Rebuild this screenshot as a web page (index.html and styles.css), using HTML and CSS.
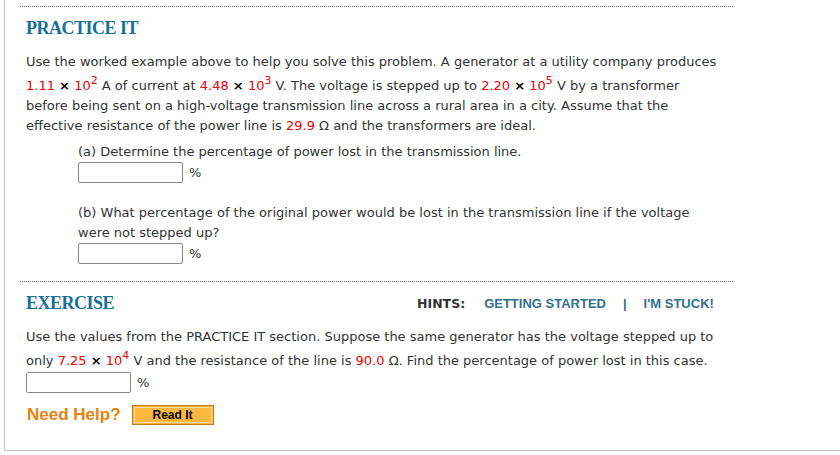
FILE: index.html
```html
<!DOCTYPE html>
<html>
<head>
<meta charset="utf-8">
<link rel="stylesheet" href="styles.css">
</head>
<body>
<div class="frame">
  <section class="sec">
    <div class="rule"></div>
    <h2 class="title">PRACTICE IT</h2>
    <p class="text">Use the worked example above to help you solve this problem. A generator at a utility company produces<br><span class="red">1.11</span> <span class="x">×</span> <span class="red">10<sup>2</sup></span> A of current at <span class="red">4.48</span> <span class="x">×</span> <span class="red">10<sup>3</sup></span> V. The voltage is stepped up to <span class="red">2.20</span> <span class="x">×</span> <span class="red">10<sup>5</sup></span> V by a transformer<br>before being sent on a high-voltage transmission line across a rural area in a city. Assume that the<br>effective resistance of the power line is <span class="red">29.9</span> Ω and the transformers are ideal.</p>
    <div class="part part-a">
      <div class="q">(a) Determine the percentage of power lost in the transmission line.</div>
      <div class="answer"><span class="box"></span><span class="unit">%</span></div>
    </div>
    <div class="part part-b">
      <div class="q">(b) What percentage of the original power would be lost in the transmission line if the voltage<br>were not stepped up?</div>
      <div class="answer"><span class="box"></span><span class="unit">%</span></div>
    </div>
  </section>
  <section class="sec sec2">
    <div class="rule"></div>
    <div class="head-row">
      <h2 class="title">EXERCISE</h2>
      <div class="hints"><span class="hl">HINTS:</span><span class="link">GETTING STARTED</span><span class="bar">|</span><span class="link">I'M STUCK!</span></div>
    </div>
    <p class="text text2">Use the values from the PRACTICE IT section. Suppose the same generator has the voltage stepped up to<br>only <span class="red">7.25</span> <span class="x">×</span> <span class="red">10<sup>4</sup></span> V and the resistance of the line is <span class="red">90.0</span> Ω. Find the percentage of power lost in this case.</p>
    <div class="answer ex-answer"><span class="box"></span><span class="unit">%</span></div>
    <div class="help">
      <span class="need">Need Help?</span>
      <span class="btn"><span class="btn-in">Read It</span></span>
    </div>
  </section>
</div>
</body>
</html>
```
FILE: styles.css
```css
html, body {
  margin: 0;
  padding: 0;
  background: #fff;
}
body {
  font-family: "DejaVu Sans", Verdana, sans-serif;
  font-size: 13px;
  color: #333;
}
.frame {
  margin-left: 4px;
  width: 900px;
  height: 451px;
  border-left: 1px solid #c8c8c8;
  border-bottom: 1px solid #c8c8c8;
  box-sizing: border-box;
}
.sec {
  padding-left: 15px;
  padding-top: 6px;
}
.rule {
  width: 713px;
  border-top: 1px dotted #777;
}
.title {
  margin: 0 0 0 6px;
  padding-top: 13px;
  font-family: "Liberation Serif", "Times New Roman", serif;
  font-weight: bold;
  font-size: 18px;
  line-height: 17px;
  letter-spacing: -0.5px;
  color: #17709a;
}
.text {
  margin: 15px 0 0 6px;
  line-height: 20px;
  white-space: nowrap;
}
.red { color: #ee0000; }
.x { color: #000; font-weight: bold; }
sup {
  font-size: 11px;
  line-height: 17px;
  vertical-align: 6px;
}
.part {
  margin-left: 58px;
}
.part-a { margin-top: 6px; }
.part-b { margin-top: 20px; }
.q { line-height: 20px; }
.answer {
  display: flex;
  align-items: center;
  height: 21px;
}
.box {
  display: inline-block;
  width: 103px;
  height: 19px;
  border: 1px solid #888;
  border-radius: 2px;
  background: #fff;
}
.unit {
  margin-left: 6px;
}
.sec2 {
  padding-top: 17px;
}
.head-row {
  display: flex;
  align-items: flex-end;
  width: 713px;
}
.hints {
  margin-left: 303px;
  font-family: "Liberation Sans", Arial, sans-serif;
  font-weight: bold;
  font-size: 13px;
  line-height: 16px;
  color: #33708a;
}
.hl {
  font-family: "DejaVu Sans", Verdana, sans-serif;
  font-size: 12.5px;
  color: #333;
  margin-right: 19px;
}
.bar { margin: 0 17px; }
.text2 { margin-top: 15px; }
.ex-answer { margin-left: 6px; margin-top: 1px; }
.help {
  display: flex;
  align-items: center;
  margin: 12px 0 0 7px;
}
.need {
  font-family: "Liberation Sans", Arial, sans-serif;
  font-weight: bold;
  font-size: 17px;
  color: #e8820c;
}
.btn {
  margin-left: 11px;
  display: inline-block;
  border: 1px solid #c8771b;
  background: #ffb540;
  padding: 1px;
}
.btn-in {
  display: block;
  width: 76px;
  height: 14px;
  border: 1px solid #f7dba0;
  background: #ffb83f;
  text-align: center;
  font-family: "Liberation Sans", Arial, sans-serif;
  font-weight: bold;
  font-size: 12px;
  line-height: 14px;
  color: #000;
}
```
